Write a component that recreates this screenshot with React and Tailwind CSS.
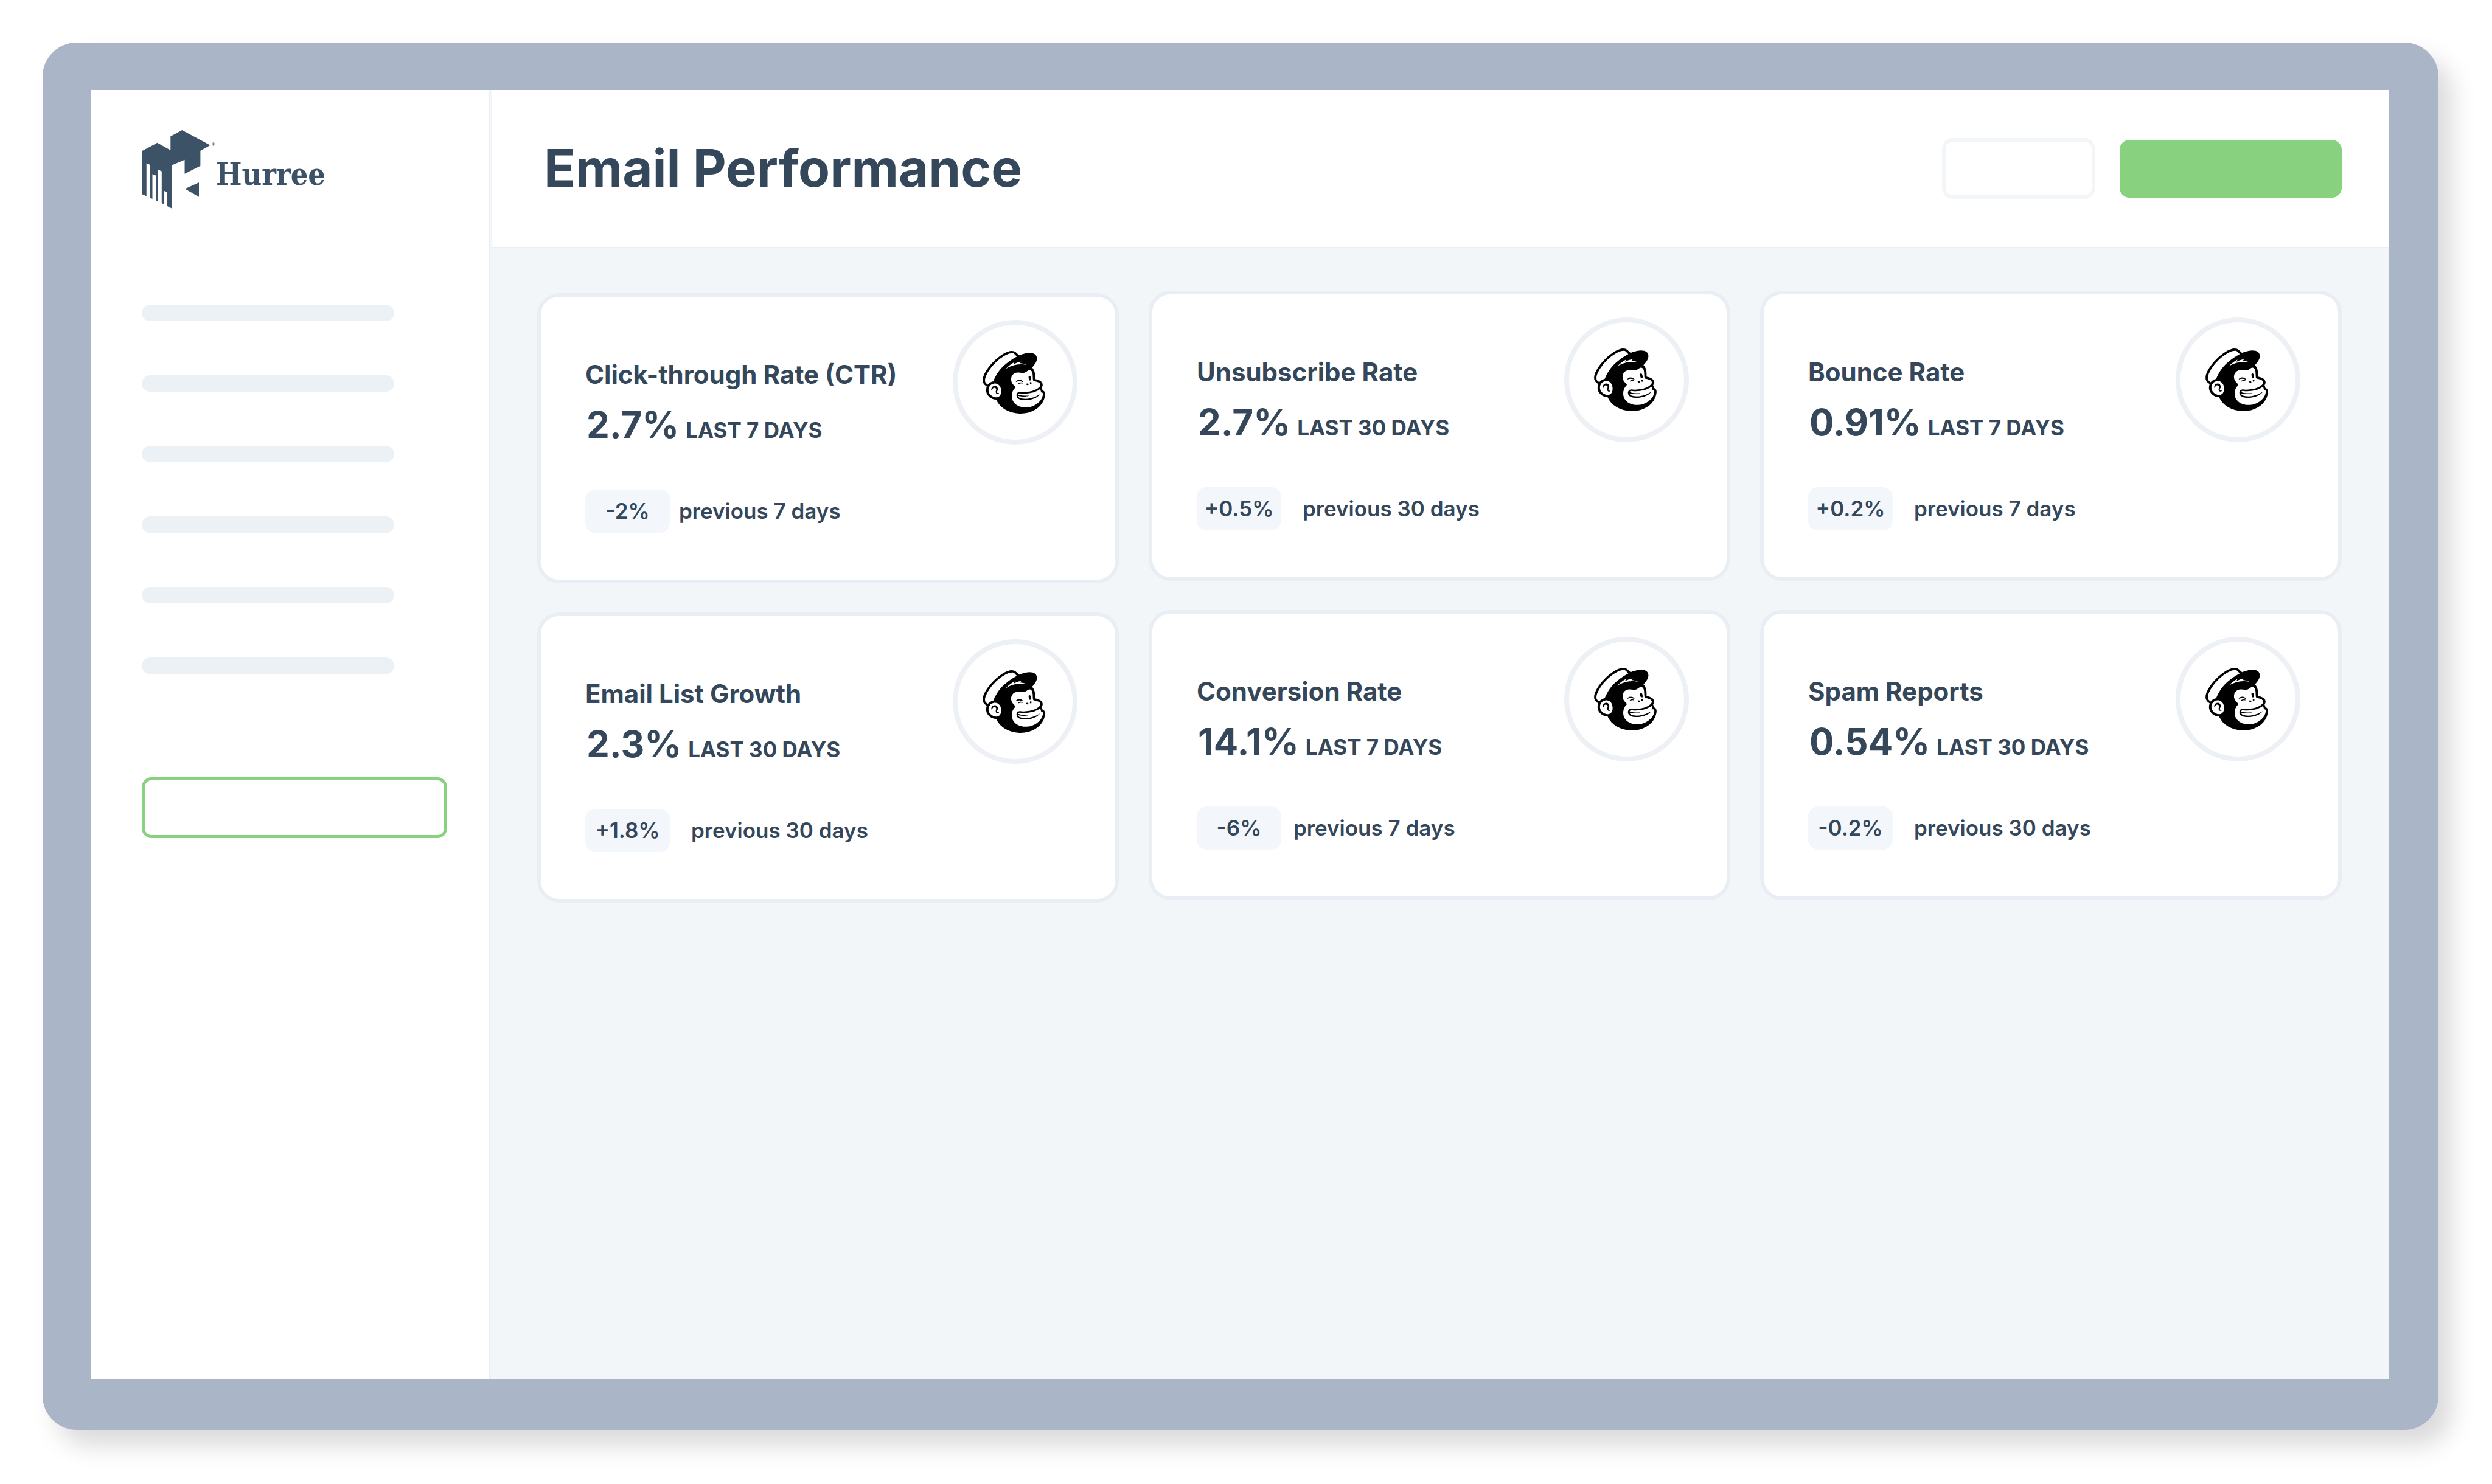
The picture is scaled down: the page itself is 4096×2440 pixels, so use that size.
import { SiMailchimp } from "react-icons/si";

const columns = [
  [
    { title: "Click-through Rate (CTR)", value: "2.7%", period: "LAST 7 DAYS", change: "-2%", previous: "previous 7 days", gap: "gap-[15px]" },
    { title: "Email List Growth", value: "2.3%", period: "LAST 30 DAYS", change: "+1.8%", previous: "previous 30 days", gap: "gap-[35px]" },
  ],
  [
    { title: "Unsubscribe Rate", value: "2.7%", period: "LAST 30 DAYS", change: "+0.5%", previous: "previous 30 days", gap: "gap-[35px]" },
    { title: "Conversion Rate", value: "14.1%", period: "LAST 7 DAYS", change: "-6%", previous: "previous 7 days", gap: "gap-[20px]" },
  ],
  [
    { title: "Bounce Rate", value: "0.91%", period: "LAST 7 DAYS", change: "+0.2%", previous: "previous 7 days", gap: "gap-[35px]" },
    { title: "Spam Reports", value: "0.54%", period: "LAST 30 DAYS", change: "-0.2%", previous: "previous 30 days", gap: "gap-[35px]" },
  ],
];

function Logo() {
  return (
    <a href="#" aria-label="Hurree" className="flex items-start text-[#3c5266]">
      <svg viewBox="103 88 456 489" className="h-[129px] w-[121px] shrink-0" fill="currentColor" aria-hidden="true">
        <path d="M103 218 L198 167 L281 213 V127 L353 88 L528 182 L467 217 V311 L369 360 V273 L291 306 V577 L261 562 V475 L242 467 V550 L226 543 V345 L203 333 V532 L189 525 V370 L168 362 V516 L153 509 V304 L131 294 V499 L103 487 Z" />
        <path d="M371 454 L458 414 V504 Z" />
        <text x="539" y="187" fontSize="26" fontWeight="700" fontFamily="Liberation Sans, sans-serif">®</text>
      </svg>
      <span className="ml-px mt-[44px] font-['DejaVu_Serif_Condensed','DejaVu_Serif',serif] text-[50px] leading-[58px] font-bold">
        Hurree
      </span>
    </a>
  );
}

function Sidebar() {
  return (
    <aside className="w-[657px] shrink-0 border-r-2 border-[#ebeff5] bg-white pt-[66px] pr-[69px] pl-[84px]">
      <Logo />
      <nav aria-label="Main" className="mt-[158px]">
        <ul className="flex flex-col gap-[89px]">
          {[1, 2, 3, 4, 5, 6].map((n) => (
            <li key={n} className="h-[27px] w-[415px] rounded-full bg-[#ecf1f6]" />
          ))}
        </ul>
      </nav>
      <button type="button" aria-label="Add" className="mt-[170px] block h-[100px] w-full rounded-[16px] border-[5px] border-[#88d17f] bg-white" />
    </aside>
  );
}

function Header() {
  return (
    <header className="flex h-[260px] items-center justify-between border-b-2 border-[#ebeff5] bg-white pr-[78px] pl-[86px]">
      <h1 className="text-[85px] leading-[104px] font-bold">Email Performance</h1>
      <div className="flex items-center gap-[40px]">
        <button type="button" aria-label="Secondary action" className="h-[100px] w-[252px] rounded-[18px] border-[6px] border-[#f2f6f9] bg-white" />
        <button type="button" aria-label="Primary action" className="h-[95px] w-[365px] rounded-[16px] bg-[#88d17f]" />
      </div>
    </header>
  );
}

function MetricCard({ title, value, period, change, previous, gap }) {
  return (
    <article className="flex items-start justify-between rounded-[36px] border-[6px] border-[#e9eef5] bg-white pr-[62px] pl-[73px]">
      <div className="pt-[103px] pb-[77px]">
        <h2 className="text-[42px] leading-[50px] font-bold">{title}</h2>
        <p className="mt-[20px] flex items-baseline gap-[11px] pl-0.5 font-bold">
          <span className="text-[60px] leading-[74px]">{value}</span>
          <span className="text-[35px] leading-[42px]">{period}</span>
        </p>
        <p className={`mt-[70px] flex items-center text-[35px] leading-[71px] font-semibold ${gap}`}>
          <span className="w-[139px] rounded-[16px] bg-[#f3f6fa] text-center">{change}</span>
          <span>{previous}</span>
        </p>
      </div>
      <div className="mt-[38px] flex size-[205px] shrink-0 items-center justify-center rounded-full border-8 border-[#edf0f5] pr-1 text-black">
        <SiMailchimp preserveAspectRatio="none" className="h-[103px] w-[109px]" aria-label="Mailchimp" />
      </div>
    </article>
  );
}

export default function App() {
  return (
    <div className="flex min-h-screen bg-white pt-[70px] pr-[88px] pb-[89px] pl-[70px] font-['Inter',sans-serif] text-[#34475b]">
      <div className="flex flex-1 rounded-[56px] bg-[#aab6c7] pt-[78px] pr-[81px] pb-[83px] pl-[79px] shadow-[22px_26px_40px_rgba(0,0,0,0.15)]">
        <Sidebar />
        <div className="flex-1 border-l-2 border-[#f2f6f9] bg-[#f2f6f9]">
          <Header />
          <main className="grid grid-cols-3 gap-[49px] pt-[70px] pr-[78px] pl-[75px]">
            {columns.map((cards, i) => (
              <div key={i} className="flex flex-col gap-[48px] first:mt-1">
                {cards.map((card) => (
                  <MetricCard key={card.title} {...card} />
                ))}
              </div>
            ))}
          </main>
        </div>
      </div>
    </div>
  );
}
